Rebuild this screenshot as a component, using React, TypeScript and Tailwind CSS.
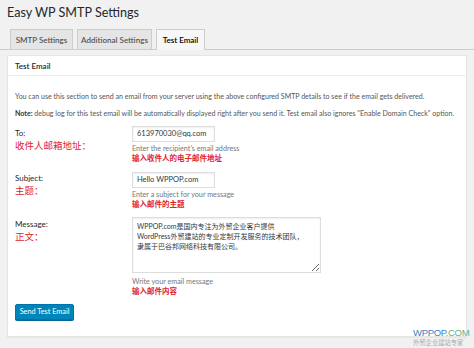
import React from "react";

const F = { fontFamily: 'Lato, "Noto Sans CJK SC", sans-serif' };

export default function App() {
  return (
    <div
      className="relative w-[474px] h-[348px] overflow-hidden bg-[#f1f1f1] text-[#555]"
      style={F}
    >
      <h1 className="pl-[7px] pt-[3px] text-[12.6px] leading-[20px] text-[#23282d] font-normal">
        Easy WP SMTP Settings
      </h1>
      <div className="mt-[7px] flex h-[20px] items-end gap-[4px] border-b border-[#ccc] pl-[10px]">
        <div className="flex h-[20px] w-[63px] items-center justify-center border border-b-0 border-[#ccc] bg-[#e5e5e5] text-[8px] font-semibold text-[#555]">
          SMTP Settings
        </div>
        <div className="flex h-[20px] w-[75px] items-center justify-center border border-b-0 border-[#ccc] bg-[#e5e5e5] text-[8px] font-semibold text-[#555]">
          Additional Settings
        </div>
        <div className="-mb-px flex h-[21px] w-[49px] items-center justify-center border border-b-0 border-[#ccc] bg-[#f7f7f7] text-[8px] font-semibold text-[#000]">
          Test Email
        </div>
      </div>
      <div className="mx-[7px] mt-[5px] h-[282px] border border-[#e5e5e5] bg-white shadow-[0_1px_1px_rgba(0,0,0,0.04)]">
        <div className="flex h-[20px] items-center border-b border-[#eee] px-[7px] text-[8px] font-semibold text-[#23282d]">
          Test Email
        </div>
        <div className="px-[7px]">
          <p className="mt-[15px] whitespace-nowrap text-[7.05px] leading-[12px]">
            You can use this section to send an email from your server using the above configured SMTP details to see if the email gets delivered.
          </p>
          <p className="mt-[5px] whitespace-nowrap text-[7.05px] leading-[12px]">
            <span className="font-bold text-[#333]">Note:</span> debug log for this test email will be automatically displayed right after you send it. Test email also ignores "Enable Domain Check" option.
          </p>

          <div className="mt-[6px] grid grid-cols-[117px_1fr]">
            <div className="pt-[2px]">
              <div className="text-[8px] leading-[11px] text-[#23282d]">To:</div>
              <div className="text-[9.5px] leading-[13px] text-[#e0242e]">收件人邮箱地址：</div>
            </div>
            <div>
              <div className="flex h-[16px] w-[83px] items-center border border-[#ddd] px-[4px] text-[7.5px] text-[#32373c] shadow-[inset_0_1px_2px_rgba(0,0,0,0.07)]">
                613970030@qq.com
              </div>
              <div className="mt-[2px] text-[7.2px] leading-[10px] text-[#777]">Enter the recipient's email address</div>
              <div className="text-[7.5px] leading-[10px] font-semibold text-[#e0242e]">输入收件人的电子邮件地址</div>
            </div>
          </div>

          <div className="mt-[8px] grid grid-cols-[117px_1fr]">
            <div className="pt-[1px]">
              <div className="text-[8px] leading-[11px] text-[#23282d]">Subject:</div>
              <div className="text-[9.5px] leading-[13px] text-[#e0242e]">主题：</div>
            </div>
            <div>
              <div className="flex h-[16px] w-[83px] items-center border border-[#ddd] px-[4px] text-[7.5px] text-[#32373c] shadow-[inset_0_1px_2px_rgba(0,0,0,0.07)]">
                Hello WPPOP.com
              </div>
              <div className="mt-[2px] text-[7.2px] leading-[10px] text-[#777]">Enter a subject for your message</div>
              <div className="text-[7.5px] leading-[10px] font-semibold text-[#e0242e]">输入邮件的主题</div>
            </div>
          </div>

          <div className="mt-[7px] grid grid-cols-[117px_1fr]">
            <div className="pt-[2px]">
              <div className="text-[8px] leading-[11px] text-[#23282d]">Message:</div>
              <div className="text-[9.5px] leading-[13px] text-[#e0242e]">正文：</div>
            </div>
            <div>
              <textarea
                readOnly
                defaultValue={"WPPOP.com是国内专注为外贸企业客户提供\nWordPress外贸建站的专业定制开发服务的技术团队，\n隶属于巴谷邦网络科技有限公司。"}
                className="block h-[56px] w-[189px] resize whitespace-pre border border-[#ddd] px-[4px] pt-[3px] text-[7px] leading-[10px] text-[#32373c] shadow-[inset_0_1px_2px_rgba(0,0,0,0.07)] outline-none"
                style={F}
              />
              <div className="mt-[4px] text-[7.2px] leading-[10px] text-[#777]">Write your email message</div>
              <div className="text-[7.5px] leading-[10px] font-semibold text-[#e0242e]">输入邮件内容</div>
            </div>
          </div>

          <div className="mt-[7px] flex">
            <div className="flex h-[16px] w-[59px] items-center justify-center rounded-[2px] border border-[#0073aa] bg-[#0085ba] text-[7.3px] text-white shadow-[0_1px_0_#006799]">
              Send Test Email
            </div>
          </div>
        </div>
      </div>

      <div className="absolute left-[413px] top-[327px] flex flex-col items-start">
        <div className="text-[9.5px] leading-[11px] tracking-[-0.3px]" style={{ fontFamily: '"Liberation Sans", sans-serif' }}>
          <span className="text-[#3f7fc0]">WPPOP</span>
          <span className="text-[#5fb08e]">.COM</span>
        </div>
        <div className="text-[6.3px] leading-[9px] text-[#aaa]">外贸企业建站专家</div>
      </div>
    </div>
  );
}
